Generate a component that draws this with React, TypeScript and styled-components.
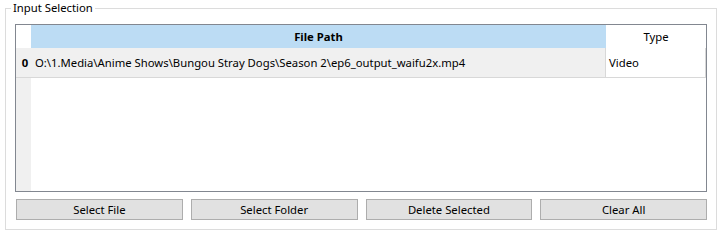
import React from "react";
import styled, { createGlobalStyle } from "styled-components";

const Global = createGlobalStyle`
  html, body { margin: 0; padding: 0; background: #ffffff; }
  body { font-family: "Noto Sans", "Open Sans", sans-serif; font-size: 11.3px; color: #000; }
  * { box-sizing: border-box; }
`;

const Page = styled.div`
  padding: 0 0 0 5px;
  width: 722px;
  height: 238px;
`;

const Group = styled.fieldset`
  margin: 0;
  width: 712px;
  height: 230px;
  border: 1px solid #dcdcdc;
  padding: 8px 9px 9px 9px;
  display: flex;
  flex-direction: column;
  gap: 7px;
`;

const Legend = styled.legend`
  margin-left: -4px;
  padding: 0 2px;
  font-size: 11.3px;
  line-height: 16px;
  height: 16px;
  color: #000;
`;

const Table = styled.div`
  height: 168px;
  border: 1px solid #828790;
  display: grid;
  grid-template-columns: 15px 575px 1fr;
  grid-template-rows: 23px 30px 1fr;
  background: #ffffff;
`;

const Corner = styled.div`
  background: #ffffff;
`;

const HeaderCell = styled.div<{ $active?: boolean }>`
  background: ${(p) => (p.$active ? "#bcdcf4" : "#ffffff")};
  font-weight: ${(p) => (p.$active ? 700 : 400)};
  display: flex;
  align-items: center;
  justify-content: center;
  line-height: 1;
  padding-top: 1px;
`;

const RowHeader = styled.div`
  background: #f0f0f0;
  border-bottom: 1px solid #d8d8d8;
  font-weight: 700;
  display: flex;
  align-items: center;
  justify-content: center;
  padding-left: 3px;
`;

const Cell = styled.div<{ $shaded?: boolean }>`
  background: ${(p) => (p.$shaded ? "#f0f0f0" : "#ffffff")};
  border-bottom: 1px solid #d8d8d8;
  border-right: 1px solid #d8d8d8;
  display: flex;
  align-items: center;
  padding-left: ${(p) => (p.$shaded ? "4px" : "3px")};
  white-space: nowrap;
  overflow: hidden;
`;

const RowHeaderFill = styled.div`
  background: #f0f0f0;
`;

const Empty = styled.div`
  grid-column: span 2;
  background: #ffffff;
`;

const Buttons = styled.div`
  display: grid;
  grid-template-columns: repeat(4, 1fr);
  gap: 8px;
  padding: 0 0 0 1px;
`;

const Button = styled.button`
  height: 21px;
  background: #e1e1e1;
  border: 1px solid #adadad;
  border-radius: 0;
  font-family: inherit;
  font-size: 11.3px;
  color: #000;
  padding: 0;
  line-height: 1;
`;

export default function App() {
  return (
    <Page>
      <Global />
      <Group>
        <Legend>Input Selection</Legend>
        <Table>
          <Corner />
          <HeaderCell $active>File Path</HeaderCell>
          <HeaderCell>Type</HeaderCell>
          <RowHeader>0</RowHeader>
          <Cell $shaded>O:\1.Media\Anime Shows\Bungou Stray Dogs\Season 2\ep6_output_waifu2x.mp4</Cell>
          <Cell>Video</Cell>
          <RowHeaderFill />
          <Empty />
        </Table>
        <Buttons>
          <Button>Select File</Button>
          <Button>Select Folder</Button>
          <Button>Delete Selected</Button>
          <Button>Clear All</Button>
        </Buttons>
      </Group>
    </Page>
  );
}
